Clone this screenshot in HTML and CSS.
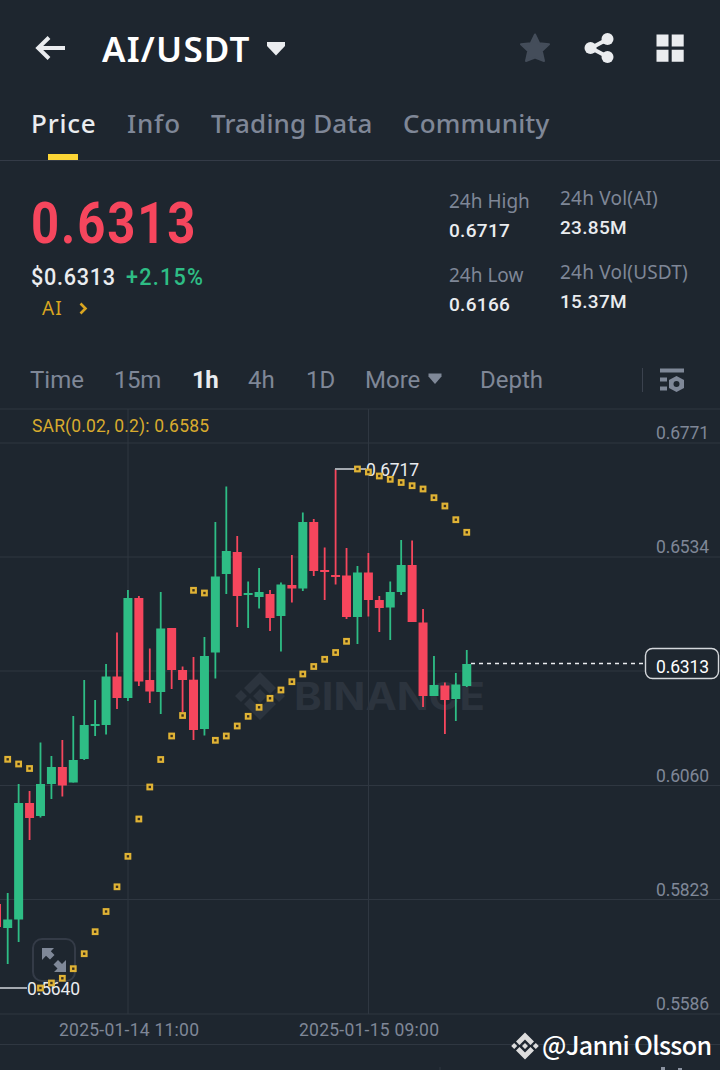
FILE: index.html
```html
<!DOCTYPE html>
<html lang="en">
<head>
<meta charset="utf-8">
<title>AI/USDT</title>
<link rel="stylesheet" href="styles.css">
</head>
<body>
<div class="screen">
  <header class="topbar">
    <svg class="back" width="32" height="26" viewBox="0 0 32 26"><path d="M30 13H3M14 2.500L3.200 13L14 23.500" fill="none" stroke="#eaecef" stroke-width="4"/></svg>
    <h1 class="pair">AI/USDT</h1>
    <svg class="caret" width="20" height="16" viewBox="0 0 20 16"><path d="M1 1H19V5L10 14.500L1 5Z" fill="#eaecef"/></svg>
    <div class="actions">
      <svg width="32" height="32" viewBox="0 0 32 32"><path d="M16 2.500L20.200 11.200L30 12.300L22.800 18.900L25 29L16 25.600L7 29L9.200 18.900L2 12.300L11.800 11.200Z" fill="#444d5a" stroke="#444d5a" stroke-width="2" stroke-linejoin="round"/></svg>
      <svg width="32" height="32" viewBox="0 0 32 32"><path d="M25 7L8 16L25 25" fill="none" stroke="#eaecef" stroke-width="4"/><g fill="#eaecef"><circle cx="24.500" cy="7" r="6"/><circle cx="7.500" cy="16" r="6"/><circle cx="24.500" cy="25" r="6"/></g></svg>
      <svg width="28" height="28" viewBox="0 0 28 28"><path d="M.500 .500h12v12h-12zM15.700 .500h12v12h-12zM.500 15.700h12v12h-12zM15.700 15.700h12v12h-12z" fill="#eaecef"/></svg>
    </div>
  </header>

  <nav class="tabs">
    <a class="tab tab-on">Price</a>
    <a class="tab tab-info">Info</a>
    <a class="tab tab-data">Trading Data</a>
    <a class="tab tab-comm">Community</a>
  </nav>

  <section class="summary">
    <div class="quote">
      <div class="last">0.6313</div>
      <div class="fiat"><div class="usd"><span>$0.6313</span></div><div class="change"><span>+2.15%</span></div></div>
      <div class="tag"><span>AI</span><svg width="9" height="13" viewBox="0 0 9 13"><path d="M1.500 1.500L6.500 6.500L1.500 11.500" fill="none" stroke="#d9a520" stroke-width="2.600"/></svg></div>
    </div>
    <dl class="stats stats-price">
      <dt>24h High</dt><dd>0.6717</dd>
      <dt>24h Low</dt><dd>0.6166</dd>
    </dl>
    <dl class="stats stats-vol">
      <dt>24h Vol(AI)</dt><dd>23.85M</dd>
      <dt>24h Vol(USDT)</dt><dd>15.37M</dd>
    </dl>
  </section>

  <nav class="periods">
    <span class="p-time">Time</span>
    <span class="p-15">15m</span>
    <span class="p-1h">1h</span>
    <span class="p-4h">4h</span>
    <span class="p-1d">1D</span>
    <span class="p-more">More<svg width="14" height="12" viewBox="0 0 14 12"><path d="M.500 .500H13.500V3.500L7 11L.500 3.500Z" fill="#7f8898"/></svg></span>
    <span class="p-depth">Depth</span>
    <span class="tools">
      <svg width="24" height="24" viewBox="0 0 24 24"><path d="M0 .500h24v4H0zM0 9.500h7v4H0zM0 18.500h7v4H0z" fill="#7f8898"/><path fill-rule="evenodd" fill="#7f8898" d="M16.500 8L24 12V20L16.500 24L9 20V12ZM16.500 13A3 3 0 1 0 16.500 19A3 3 0 1 0 16.500 13Z"/></svg>
    </span>
  </nav>

  <svg class="chart" width="720" height="662" viewBox="0 408 720 662">
    <path class="grid" d="M0 409H720M0 443H720M0 557H720M0 671H720M0 785.500H720M0 899.500H720M0 1014H720M0 1044.500H720M128 409V1014M368.500 409V1014M440 1067V1070"/>
    <g class="watermark">
      <path d="M260 672L276 688L270 694L260 684L250 694L244 688ZM241 690L247 696L241 702L235 696ZM279 690L285 696L279 702L273 696ZM260 689L267 696L260 703L253 696ZM250 698L260 708L270 698L276 704L260 720L244 704Z"/>
      <text x="294" y="709.500" textLength="191" lengthAdjust="spacingAndGlyphs">BINANCE</text>
    </g>
    <g class="axis">
      <text x="656" y="439" textLength="53">0.6771</text>
      <text x="656" y="553" textLength="53">0.6534</text>
      <text x="656" y="782" textLength="53">0.6060</text>
      <text x="656" y="896" textLength="53">0.5823</text>
      <text x="656" y="1010" textLength="53">0.5586</text>
      <text x="59" y="1036" textLength="140">2025-01-14 11:00</text>
      <text x="299" y="1036" textLength="140">2025-01-15 09:00</text>
    </g>
    <text class="sar-label" x="32" y="432" textLength="177">SAR(0.02, 0.2): 0.6585</text>
    <rect class="expand" x="33" y="939" width="42" height="42" rx="9"/>
    <path class="expand-arrows" d="M42 948H54L50.800 951.200L54.500 955L50 959.500L46 955.800L42 960ZM66 972H54L57.500 968.500L53.500 964.500L58 960L62 964L66 960Z"/>
    <g id="candles"></g>
    <path class="leader" d="M335 469H366M0 988H27"/>
    <g class="extreme">
      <text x="366" y="476" textLength="53">0.6717</text>
      <text x="27" y="995" textLength="53">0.5640</text>
    </g>
    <g id="sar"></g>
    <path class="last-line" d="M471 663.500H645"/>
    <rect class="last-box" x="645.500" y="648.500" width="73" height="30" rx="7"/>
    <text class="last-text" x="656" y="673" textLength="53">0.6313</text>
    <path class="credit-logo" d="M525 1032.500L534 1041.500L530.500 1045L525 1039.500L519.500 1045L516 1041.500ZM514.200 1043L517.200 1046L514.200 1049L511.200 1046ZM535.800 1043L538.800 1046L535.800 1049L532.800 1046ZM525 1043L528 1046L525 1049L522 1046ZM519.500 1047L525 1052.500L530.500 1047L534 1050.500L525 1059.500L516 1050.500Z"/>
    <text class="credit" x="542" y="1055" textLength="170">@Janni Olsson</text>
    <path d="M661 1070V1067H665V1070M678 1070V1068H682V1070" fill="#8a92a0"/>
  </svg>
</div>
<script src="chart.js"></script>
</body>
</html>
```
FILE: styles.css
```css
* { box-sizing: border-box; }
body { margin: 0; background: #1e262f; font-family: "Noto Sans", sans-serif; color: #eaecef; }
.screen { width: 720px; height: 1070px; overflow: hidden; display: flex; flex-direction: column; }

.topbar { height: 96px; flex: none; display: flex; align-items: center; padding: 0 36px 0 35px; }
.back { margin-right: 35px; }
.pair { margin: 0; width: 148px; font-size: 35px; line-height: 48px; font-weight: 600; letter-spacing: 1.200px; color: #fff; padding-top: 2px; white-space: nowrap; }
.caret { margin-left: 16px; margin-top: 1px; }
.actions { margin-left: auto; display: flex; align-items: center; }
.actions svg { margin-left: 41px; }
.actions svg:nth-child(2) { margin-left: 32px; }

.tabs { height: 65px; flex: none; display: flex; padding-left: 31px; border-bottom: 1px solid #343b47; font-size: 26px; line-height: 36px; font-weight: 500; }
.tab { padding-top: 9px; white-space: nowrap; color: #7f8797; letter-spacing: 0.150px; }
.tab-on { width: 96px; color: #eaecef; letter-spacing: 0.800px; }
.tab-on::after { content: ""; display: block; width: 30px; height: 6px; margin: 13px 0 0 17px; background: #fcd535; }
.tab-info { width: 84px; letter-spacing: 0.800px; }
.tab-data { width: 192px; }

.summary { height: 189px; flex: none; display: flex; padding-left: 31px; }
.quote { width: 418px; padding-top: 30px; }
.last { font: 700 57px/66px Roboto, sans-serif; letter-spacing: 2.200px; color: #f6465d; transform: scaleX(0.86); transform-origin: 0 0; }
.fiat { display: flex; font: 500 24px/32px Roboto, sans-serif; margin-top: 4px; }
.fiat span { display: inline-block; transform: scaleX(0.9); transform-origin: 0 0; }
.usd { width: 95px; letter-spacing: 0.800px; }
.change { color: #2ebd85; letter-spacing: 1.400px; }
.tag { display: flex; align-items: center; gap: 16px; padding-left: 11px; font-size: 19px; line-height: 30px; letter-spacing: 1px; color: #d9a520; }
.stats { margin: 0; }
.stats-price { width: 111px; padding-top: 26px; }
.stats-vol { padding-top: 23px; }
.stats dt { font-size: 19px; line-height: 28px; color: #7f8797; white-space: nowrap; }
.stats-vol dt { letter-spacing: 0.200px; }
.stats dd { margin: 2px 0 16px; font: 500 19px/28px Roboto, sans-serif; letter-spacing: 0.300px; }

.periods { height: 58px; flex: none; display: flex; align-items: center; padding: 1px 0 0 30px; font: 400 24px/32px Roboto, sans-serif; color: #7f8797; white-space: nowrap; }
.p-time { width: 84px; }
.p-15 { width: 78px; letter-spacing: -0.400px; }
.p-1h { width: 56px; font-weight: 700; letter-spacing: -0.600px; color: #eaecef; }
.p-4h { width: 58px; }
.p-1d { width: 59px; }
.p-more { width: 115px; display: flex; align-items: center; gap: 8px; }
.p-more svg { margin-top: -2px; }
.tools { height: 24px; margin-left: auto; padding-left: 17px; margin-right: 36px; border-left: 1px solid #3b424e; }
.tools svg { display: block; }

.chart { display: block; flex: none; font: 400 17.500px Roboto, sans-serif; }
.grid { fill: none; stroke: #2f3741; stroke-width: 1; }
.watermark { fill: #2c343e; font: 700 38px Inter, sans-serif; }
.axis { fill: #7f8797; }
.sar-label { fill: #d8ab2e; }
.expand { fill: none; stroke: #343b47; stroke-width: 2; }
.expand-arrows { fill: #7f8898; }
.leader { stroke: #a4a9b0; stroke-width: 2; }
.extreme { fill: #eaecef; }
.last-line { stroke: #eaecef; stroke-width: 1.300; stroke-dasharray: 4 4; }
.last-box { fill: #1e262f; stroke: #d4d7db; stroke-width: 1.400; }
.last-text { fill: #fff; }
.credit { fill: #fff; font: 500 25px "Noto Sans CJK SC", sans-serif; }
.credit-logo { fill: #dddddd; }
.up { fill: #2ebd85; }
.down { fill: #f6465d; }
.sar-dot { fill: #3a2f1e; stroke: #e0b335; stroke-width: 2.200; }
```
FILE: chart.js
```js
const STEP = 10.93;
const START = 7.7;
// Each row: direction, high, body top, body bottom, low, SAR.
const rows = [
  ["up", 893, 919.5, 928, 964, 759.3], ["up", 784, 803, 919.5, 942, 764],
  ["down", 791, 803, 818, 840, 768.5], ["up", 742.5, 784, 816, 817.5, 988],
  ["up", 756, 767, 784, 799, 983], ["down", 740, 767, 785.5, 796.5, 978.3],
  ["up", 716, 760, 782.5, 782.5, 968.7], ["up", 680, 725, 759, 760, 953.7],
  ["up", 700, 724, 726, 736, 931.7], ["up", 664, 676.5, 725, 734.5, 911.5],
  ["down", 632.5, 676.5, 698, 709, 886.8], ["up", 590, 598, 698, 701, 856.3],
  ["down", 596, 598, 681.5, 686, 819], ["down", 648.5, 680, 691.5, 703, 787],
  ["up", 592, 628.5, 692, 714, 759.5], ["down", 628, 628, 670, 689, 736],
  ["down", 666.5, 670, 680, 712, 715.5], ["down", 657, 679.7, 730, 740, 590.3],
  ["up", 637, 656, 729, 735.5, 593], ["up", 522, 576.5, 652.5, 678.5, 740.3],
  ["up", 486.5, 551, 574, 594, 736], ["down", 536, 552, 596, 627, 726],
  ["up", 581.5, 593, 595, 628, 716.3], ["up", 568, 592, 597, 608.5, 707.3],
  ["down", 590, 594, 618, 631, 698.3], ["up", 582.5, 584.5, 616, 651.5, 690],
  ["down", 555, 585, 588.5, 602.5, 681.7], ["up", 512.5, 522, 588.5, 591, 674],
  ["down", 519, 522, 571, 576, 666.5], ["down", 547.5, 570, 572, 600, 659.3],
  ["down", 469, 575, 577, 584.5, 652.5], ["down", 548, 575.5, 617, 619, 641.3],
  ["up", 566, 572.5, 617, 644, 469], ["down", 553, 572.5, 600, 616.5, 472],
  ["down", 596, 600, 608, 632, 476], ["up", 581.5, 592, 607.5, 640, 479.3],
  ["up", 540, 565, 592, 595, 482.5], ["down", 540.5, 565, 622, 622, 485.7],
  ["down", 609, 622.5, 696, 707, 489], ["up", 656, 685, 696, 696, 497.7],
  ["down", 682.5, 685.5, 700, 734, 506], ["up", 673, 684.5, 699, 721, 519.7],
  ["up", 650, 664, 686, 687, 532.3]
];

function rect(parent, cls, x, y, w, h) {
  const r = document.createElementNS("http://www.w3.org/2000/svg", "rect");
  r.setAttribute("class", cls);
  r.setAttribute("x", x);
  r.setAttribute("y", y);
  r.setAttribute("width", w);
  r.setAttribute("height", h);
  parent.appendChild(r);
}

const candles = document.getElementById("candles");
const sar = document.getElementById("sar");
rect(candles, "down", -8, 904, 9, 23);
rows.forEach(([dir, high, top, bottom, low, s], i) => {
  const x = START + STEP * i;
  rect(candles, dir, x - 0.9, high, 1.8, low - high);
  rect(candles, dir, x - 4.5, top, 9, bottom - top);
  rect(sar, "sar-dot", x - 2.3, s - 2.3, 4.6, 4.6);
});
```
